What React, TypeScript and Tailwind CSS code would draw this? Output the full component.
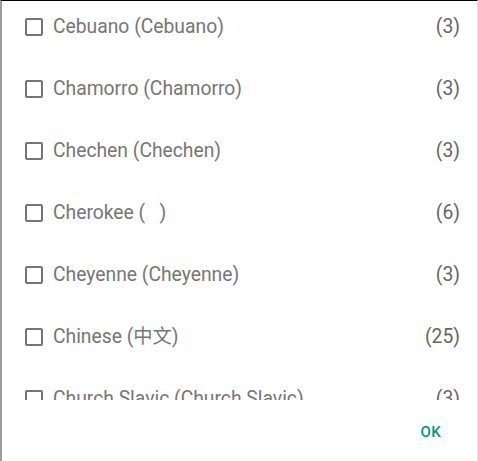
import React from 'react'

type Lang = { name: string; native: string; count: number }

const langs: Lang[] = [
  { name: 'Cebuano', native: 'Cebuano', count: 3 },
  { name: 'Chamorro', native: 'Chamorro', count: 3 },
  { name: 'Chechen', native: 'Chechen', count: 3 },
  { name: 'Cherokee', native: '\u00a0\u00a0\u00a0', count: 6 },
  { name: 'Cheyenne', native: 'Cheyenne', count: 3 },
  { name: 'Chinese', native: '中文', count: 25 },
  { name: 'Church Slavic', native: 'Church Slavic', count: 3 },
]

function Checkbox() {
  return (
    <span className="flex-shrink-0 w-[18px] h-[18px] border-2 border-[#757575] rounded-[2px]" />
  )
}

export default function App() {
  return (
    <div
      className="w-[478px] h-[461px] bg-white border-t border-t-black border-l-2 border-l-[#9e9e9e] border-r border-r-[#e0e0e0] flex flex-col overflow-hidden"
      style={{ fontFamily: 'Roboto, "Noto Sans CJK SC", sans-serif' }}
    >
      {/* list */}
      <div className="h-[399px] overflow-hidden flex-shrink-0">
        <div className="-mt-[5px]">
          {langs.map((l) => (
            <div key={l.name} className="h-[62px] flex items-center pl-[23px] pr-[17px]">
              <Checkbox />
              <span className="ml-[10px] flex-1 text-[19.3px] text-[#767676] whitespace-nowrap">
                {l.name} ({l.native})
              </span>
              <span className="text-[19.3px] text-[#666666]">({l.count})</span>
            </div>
          ))}
        </div>
      </div>

      {/* buttons */}
      <div className="flex-1 flex items-center justify-end pr-[36px] pt-[4px]">
        <button className="text-[15px] font-medium text-[#009688] tracking-wide">OK</button>
      </div>
    </div>
  )
}
